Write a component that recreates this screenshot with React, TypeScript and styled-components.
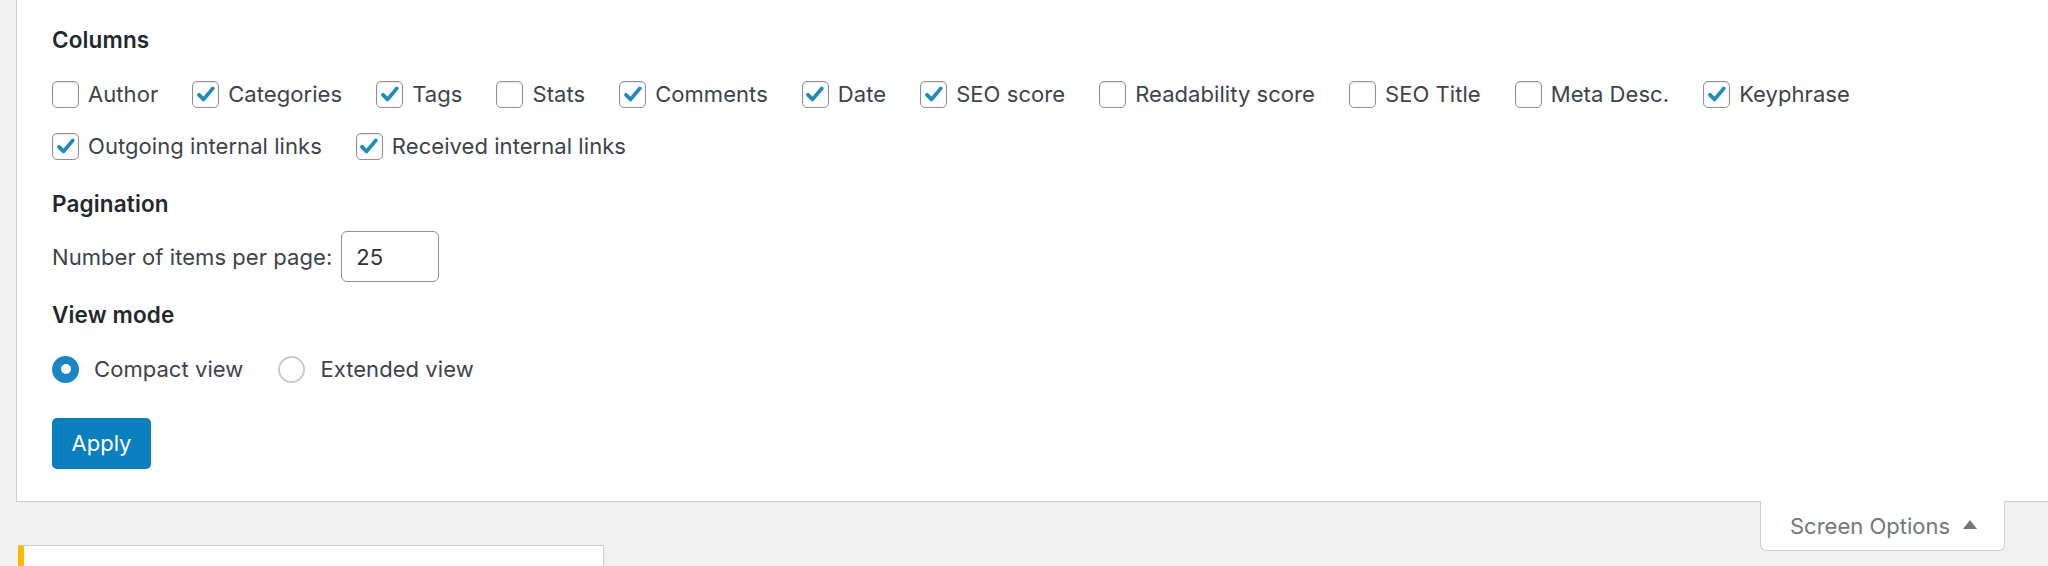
import React from "react";
import styled, { createGlobalStyle } from "styled-components";

const Global = createGlobalStyle`
  html, body { margin: 0; padding: 0; }
  body {
    background: #f1f1f1;
    font-family: Inter, "Noto Sans", "Liberation Sans", sans-serif;
    color: #444;
    overflow: hidden;
  }
  * { box-sizing: border-box; }
`;

const Page = styled.div`
  width: 2048px;
  height: 566px;
  overflow: hidden;
  padding-left: 16px;
`;

const Panel = styled.div`
  background: #fff;
  border-left: 1px solid #ccd0d4;
  border-bottom: 1px solid #ccd0d4;
  padding: 24px 34px 32px 35px;
`;

const Legend = styled.div<{ $mt?: number }>`
  font-size: 22.5px;
  font-weight: 600;
  letter-spacing: 0.15px;
  color: #23282d;
  line-height: 31px;
  margin-top: ${(p) => p.$mt ?? 0}px;
`;

const CheckList = styled.div`
  display: flex;
  flex-wrap: wrap;
  margin-top: 13px;
`;

const Item = styled.label`
  display: flex;
  align-items: center;
  height: 52px;
  gap: 9px;
  margin-right: 34px;
  font-size: 22px;
  letter-spacing: 0.06px;
  white-space: nowrap;
  color: #3c434a;
`;

const Box = styled.span`
  width: 27px;
  height: 27px;
  border: 1.7px solid #8c8f94;
  border-radius: 5px;
  background: #fff;
  box-shadow: inset 0 1px 2px rgba(0, 0, 0, 0.1);
  display: flex;
  align-items: center;
  justify-content: center;
  flex: none;
`;

const Check = () => (
  <svg width="22" height="22" viewBox="0 0 22 22">
    <path
      d="M4 11.8 L8.6 16.4 L17.8 5.4"
      fill="none"
      stroke="#1e8cbe"
      strokeWidth="3.8"
      strokeLinecap="round"
      strokeLinejoin="round"
    />
  </svg>
);

const InputRow = styled.div`
  display: flex;
  align-items: center;
  gap: 9px;
  margin-top: 12px;
  font-size: 22px;
  letter-spacing: 0.06px;
  color: #3c434a;
`;

const NumberBox = styled.div`
  width: 98px;
  height: 51px;
  border: 1.7px solid #8c8f94;
  border-radius: 6px;
  padding-left: 14px;
  display: flex;
  align-items: center;
  font-size: 22px;
  color: #2c3338;
`;

const RadioRow = styled.div`
  display: flex;
  margin-top: 13px;
`;

const Radio = styled.span<{ $on: boolean }>`
  width: 27px;
  height: 27px;
  border-radius: 50%;
  flex: none;
  display: flex;
  align-items: center;
  justify-content: center;
  background: ${(p) => (p.$on ? "#1a86c6" : "#fff")};
  border: ${(p) => (p.$on ? "none" : "2px solid #c8cacc")};
  &::after {
    content: "";
    display: ${(p) => (p.$on ? "block" : "none")};
    width: 10px;
    height: 10px;
    border-radius: 50%;
    background: #fff;
  }
`;

const RadioItem = styled.label`
  display: flex;
  align-items: center;
  height: 52px;
  gap: 15px;
  margin-right: 35px;
  font-size: 22px;
  letter-spacing: 0.06px;
  color: #3c434a;
  white-space: nowrap;
`;

const ApplyButton = styled.button`
  margin-top: 23px;
  width: 99px;
  height: 51px;
  border: none;
  border-radius: 5px;
  background: #0a7fc0;
  color: #fff;
  font-family: inherit;
  font-size: 22px;
  display: flex;
  align-items: center;
  justify-content: center;
  padding: 0 0 2px;
`;

const TabRow = styled.div`
  display: flex;
  justify-content: flex-end;
  padding-right: 43px;
  height: 43px;
`;

const Tab = styled.div`
  width: 245px;
  height: 50px;
  background: #fff;
  border: 1px solid #ccd0d4;
  border-top: none;
  border-radius: 0 0 6px 6px;
  margin-top: -1px;
  display: flex;
  align-items: center;
  justify-content: center;
  gap: 13px;
  padding-left: 2px;
  font-size: 22px;
  color: #72777c;
  position: relative;
  z-index: 1;
`;

const Triangle = styled.span`
  width: 0;
  height: 0;
  border-left: 7px solid transparent;
  border-right: 7px solid transparent;
  border-bottom: 9px solid #72777c;
  margin-top: -2px;
`;

const Notice = styled.div`
  margin-left: 2px;
  width: 586px;
  height: 60px;
  background: #fff;
  border: 1px solid #ccd0d4;
  border-left: 6px solid #ffb900;
`;

const columns: { label: string; on: boolean }[] = [
  { label: "Author", on: false },
  { label: "Categories", on: true },
  { label: "Tags", on: true },
  { label: "Stats", on: false },
  { label: "Comments", on: true },
  { label: "Date", on: true },
  { label: "SEO score", on: true },
  { label: "Readability score", on: false },
  { label: "SEO Title", on: false },
  { label: "Meta Desc.", on: false },
  { label: "Keyphrase", on: true },
  { label: "Outgoing internal links", on: true },
  { label: "Received internal links", on: true },
];

export default function App() {
  return (
    <>
      <Global />
      <Page>
        <Panel>
          <Legend>Columns</Legend>
          <CheckList>
            {columns.map((c) => (
              <Item key={c.label}>
                <Box>{c.on && <Check />}</Box>
                {c.label}
              </Item>
            ))}
          </CheckList>
          <Legend $mt={16}>Pagination</Legend>
          <InputRow>
            Number of items per page:
            <NumberBox>25</NumberBox>
          </InputRow>
          <Legend $mt={17}>View mode</Legend>
          <RadioRow>
            <RadioItem>
              <Radio $on={true} />
              Compact view
            </RadioItem>
            <RadioItem>
              <Radio $on={false} />
              Extended view
            </RadioItem>
          </RadioRow>
          <ApplyButton>Apply</ApplyButton>
        </Panel>
        <TabRow>
          <Tab>
            Screen Options
            <Triangle />
          </Tab>
        </TabRow>
        <Notice />
      </Page>
    </>
  );
}
